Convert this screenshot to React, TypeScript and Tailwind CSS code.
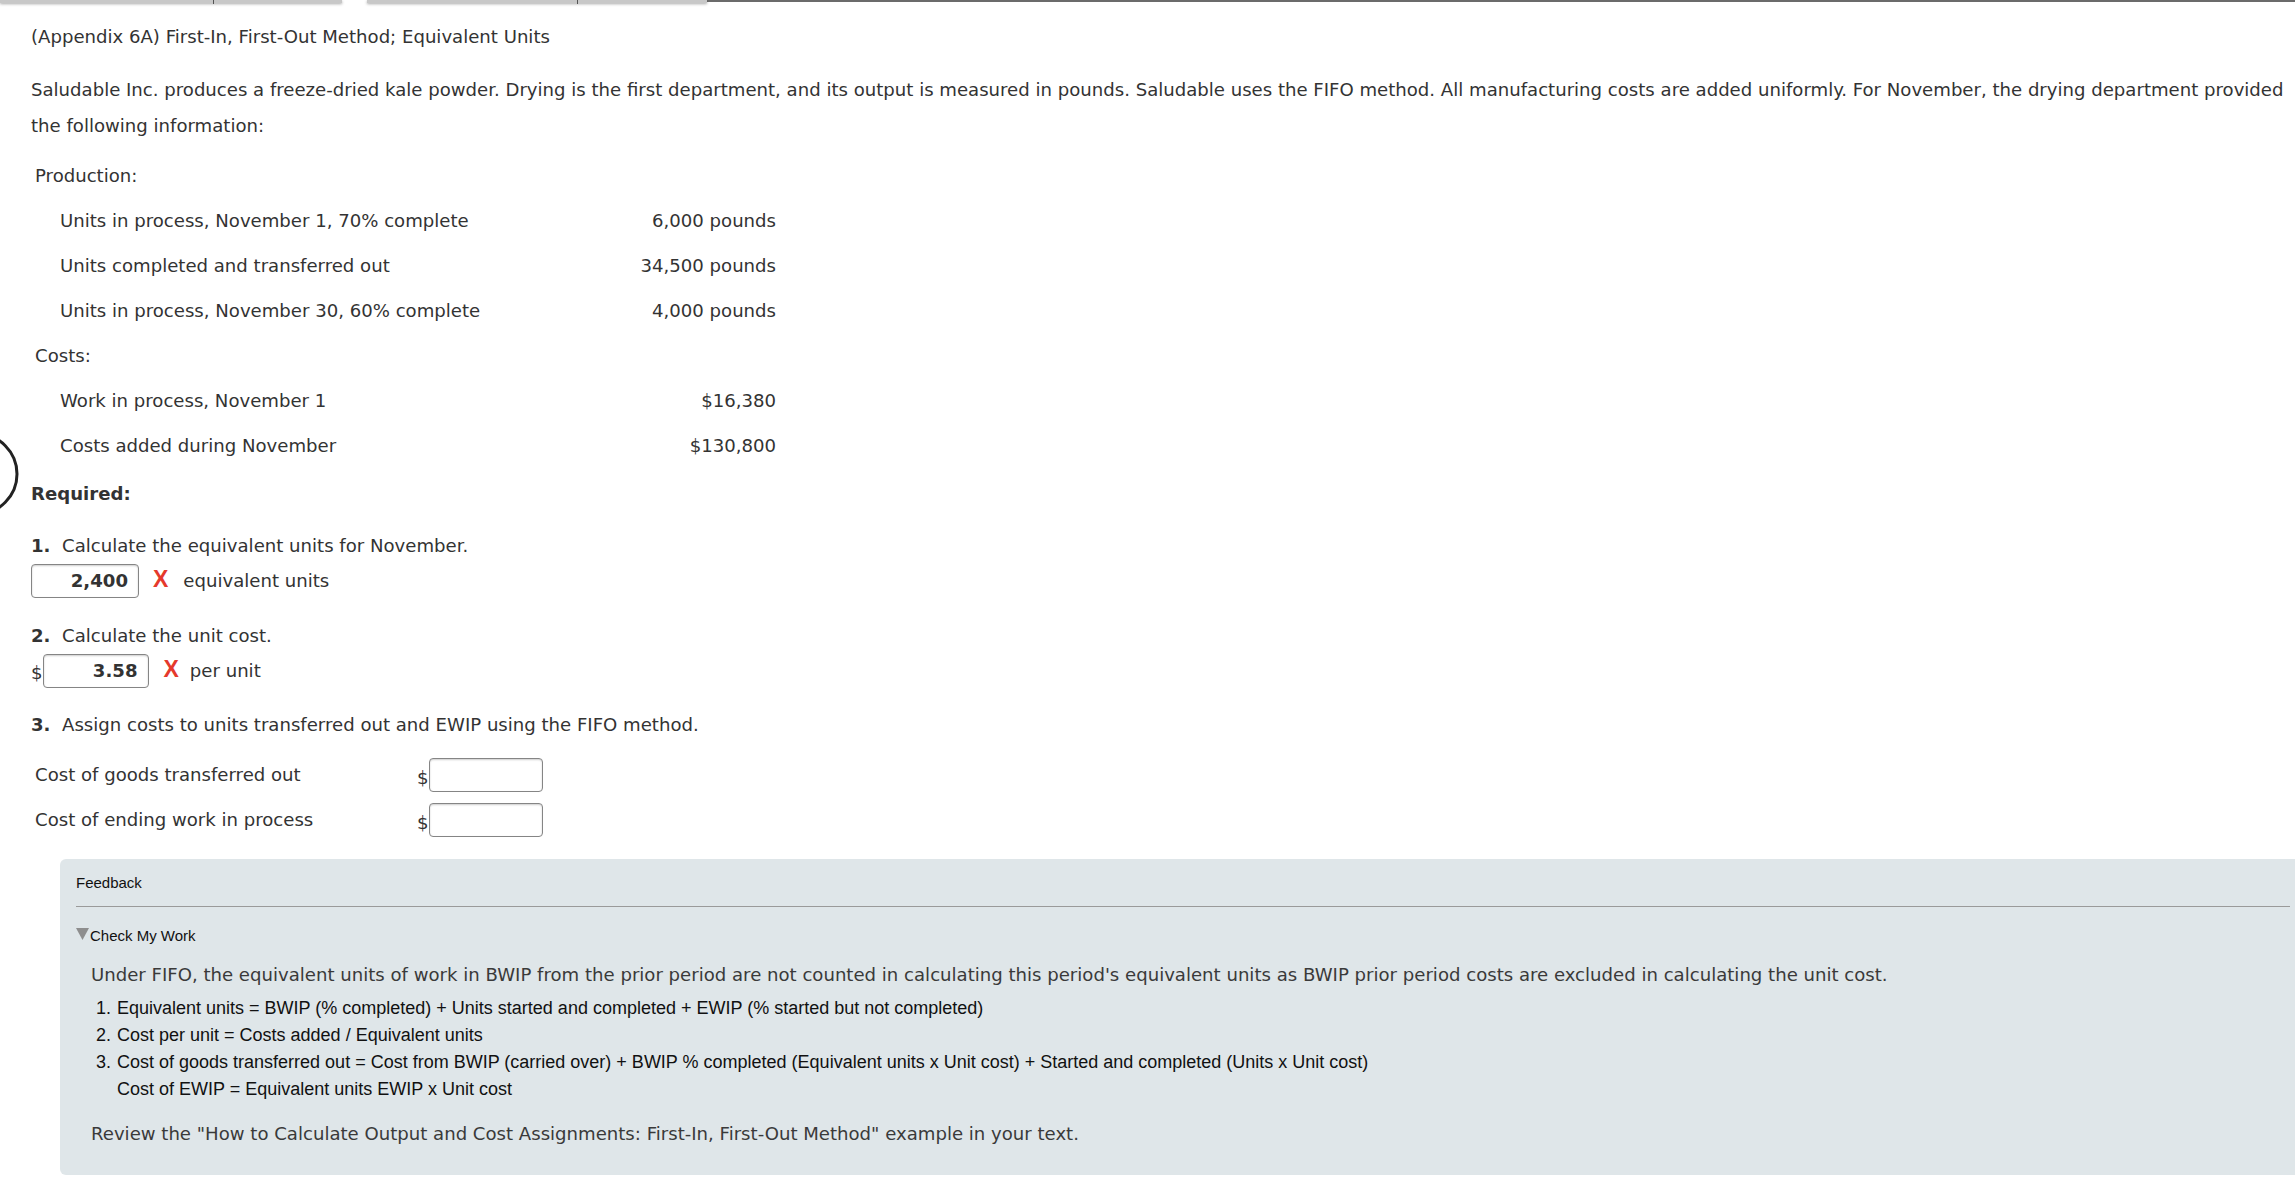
import React from "react";

const productionRows = [
  { label: "Units in process, November 1, 70% complete", value: "6,000 pounds" },
  { label: "Units completed and transferred out", value: "34,500 pounds" },
  { label: "Units in process, November 30, 60% complete", value: "4,000 pounds" },
];

const costRows = [
  { label: "Work in process, November 1", value: "$16,380" },
  { label: "Costs added during November", value: "$130,800" },
];

function WrongMark() {
  return (
    <span className="font-['Liberation_Sans'] font-bold text-[23px] leading-none text-[#e5392c]">X</span>
  );
}

function AnswerBox({ value, width }: { value?: string; width: string }) {
  return (
    <div
      className={`${width} h-[34px] rounded-[4px] border border-[#858585] bg-white shadow-[inset_0_1px_2px_rgba(0,0,0,0.2)] flex items-center justify-end pr-[10px] font-bold text-[#333]`}
    >
      {value}
    </div>
  );
}

export default function App() {
  return (
    <div className="relative min-h-screen bg-white font-['DejaVu_Sans',sans-serif] text-[18.1px] text-[#333] overflow-hidden">
      {/* top strip */}
      <div className="flex h-[4px] items-start">
        <div className="relative w-[342px] h-[3px] bg-[#c8c8c8] shadow-[0_1px_3px_rgba(0,0,0,0.35)]">
          <div className="absolute left-[213px] top-0 w-px h-[4px] bg-[#555]" />
        </div>
        <div className="w-[25px]" />
        <div className="relative w-[340px] h-[3px] bg-[#c8c8c8] shadow-[0_1px_3px_rgba(0,0,0,0.35)]">
          <div className="absolute left-[210px] top-0 w-px h-[4px] bg-[#555]" />
        </div>
        <div className="flex-1 h-[2px] bg-[#6b6b6b]" />
      </div>

      {/* partial circle on the left edge */}
      <svg className="absolute left-0 top-[430px]" width="24" height="90" viewBox="0 0 24 90">
        <circle cx="-23" cy="44" r="40" fill="none" stroke="#222" strokeWidth="3" />
      </svg>

      <div className="pl-[31px] pt-[15px]">
        <div className="leading-[36px]">(Appendix 6A) First-In, First-Out Method; Equivalent Units</div>

        <p className="mt-[17px] leading-[36px]">
          Saludable Inc. produces a freeze-dried kale powder. Drying is the first department, and its output is
          measured in pounds. Saludable uses the FIFO method. All manufacturing costs are added uniformly. For
          November, the drying department provided the following information:
        </p>

        <div className="mt-[9px] w-[745px] pl-[4px]">
          <div className="h-[45px] flex items-center">Production:</div>
          {productionRows.map((r) => (
            <div key={r.label} className="h-[45px] flex items-center justify-between pl-[25px]">
              <span>{r.label}</span>
              <span>{r.value}</span>
            </div>
          ))}
          <div className="h-[45px] flex items-center">Costs:</div>
          {costRows.map((r) => (
            <div key={r.label} className="h-[45px] flex items-center justify-between pl-[25px]">
              <span>{r.label}</span>
              <span>{r.value}</span>
            </div>
          ))}
        </div>

        <div className="mt-[8px] leading-[36px] font-bold">Required:</div>

        <div className="mt-[16px] leading-[36px]">
          <span className="inline-block w-[31px] font-bold">1.</span>Calculate the equivalent units for November.
        </div>
        <div className="flex items-center">
          <AnswerBox value="2,400" width="w-[108px]" />
          <span className="ml-[14px] mr-[15px]">
            <WrongMark />
          </span>
          <span>equivalent units</span>
        </div>

        <div className="mt-[20px] leading-[36px]">
          <span className="inline-block w-[31px] font-bold">2.</span>Calculate the unit cost.
        </div>
        <div className="flex items-center">
          <span className="self-end leading-[30px]">$</span>
          <AnswerBox value="3.58" width="w-[106px]" />
          <span className="ml-[15px] mr-[11px]">
            <WrongMark />
          </span>
          <span>per unit</span>
        </div>

        <div className="mt-[19px] leading-[36px]">
          <span className="inline-block w-[31px] font-bold">3.</span>Assign costs to units transferred out and EWIP
          using the FIFO method.
        </div>

        <div className="mt-[15px] pl-[4px] flex flex-col gap-[11px]">
          <div className="flex items-center">
            <span className="w-[382px]">Cost of goods transferred out</span>
            <span className="self-end leading-[28px]">$</span>
            <AnswerBox width="w-[114px]" />
          </div>
          <div className="flex items-center">
            <span className="w-[382px]">Cost of ending work in process</span>
            <span className="self-end leading-[28px]">$</span>
            <AnswerBox width="w-[114px]" />
          </div>
        </div>
      </div>

      {/* feedback panel */}
      <div className="ml-[60px] mt-[22px] h-[316px] rounded-l-[6px] bg-[#dfe6e9] pl-[16px] pr-[5px] pt-[15px]">
        <div className="font-['Liberation_Sans',sans-serif] text-[15px] leading-[17px] text-[#111]">Feedback</div>
        <div className="mt-[15px] h-px bg-[#9a9a9a]" />
        <div className="mt-[20px] flex items-center font-['Liberation_Sans',sans-serif] text-[15px] leading-[17px] text-[#111]">
          <svg width="13" height="12" viewBox="0 0 13 12" className="mr-px -mt-[3px]">
            <polygon points="0,0 13,0 6.5,12" fill="#8e8e8e" />
          </svg>
          Check My Work
        </div>
        <div className="pl-[15px]">
          <div className="mt-[13px] leading-[36px] text-[#3a3a3a]">
            Under FIFO, the equivalent units of work in BWIP from the prior period are not counted in calculating
            this period's equivalent units as BWIP prior period costs are excluded in calculating the unit cost.
          </div>
          <div className="mt-[2px] font-['Liberation_Sans',sans-serif] text-[18px] leading-[27px] text-[#111]">
            <div className="flex">
              <span className="w-[26px] text-right pr-[6px]">1.</span>
              <span>
                Equivalent units = BWIP (% completed) + Units started and completed + EWIP (% started but not
                completed)
              </span>
            </div>
            <div className="flex">
              <span className="w-[26px] text-right pr-[6px]">2.</span>
              <span>Cost per unit = Costs added / Equivalent units</span>
            </div>
            <div className="flex">
              <span className="w-[26px] text-right pr-[6px]">3.</span>
              <span>
                Cost of goods transferred out = Cost from BWIP (carried over) + BWIP % completed (Equivalent units x
                Unit cost) + Started and completed (Units x Unit cost)
                <br />
                Cost of EWIP = Equivalent units EWIP x Unit cost
              </span>
            </div>
          </div>
          <div className="mt-[13px] leading-[36px] text-[#3a3a3a]">
            Review the "How to Calculate Output and Cost Assignments: First-In, First-Out Method" example in your
            text.
          </div>
        </div>
      </div>
    </div>
  );
}
